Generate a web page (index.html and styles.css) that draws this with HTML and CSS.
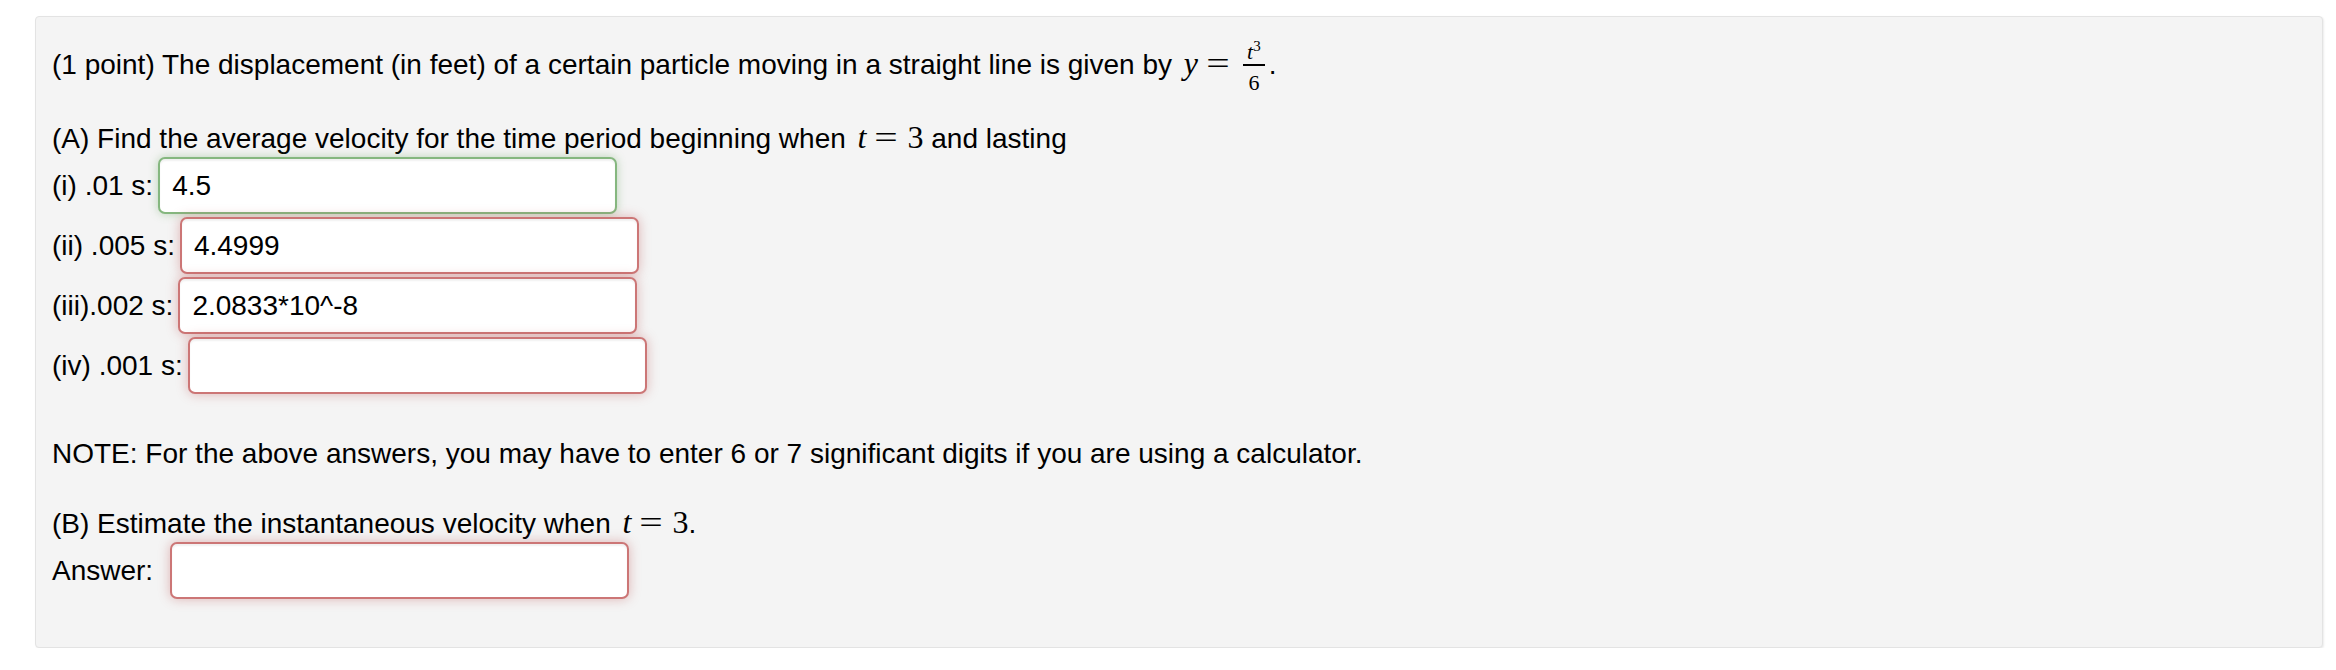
FILE: index.html
```html
<!DOCTYPE html>
<html lang="en">
<head>
    <meta charset="UTF-8">
    <title>Problem 1</title>
    <link rel="stylesheet" href="styles.css">
</head>
<body>
    <div class="problem">
        <div class="line first">(1 point) The displacement (in feet) of a certain particle moving in a straight line is given by <span class="math"><i>y</i><span class="op">=</span><span class="frac"><span class="num"><i>t</i><sup>3</sup></span><span class="den">6</span></span></span>.</div>

        <div class="line">(A) Find the average velocity for the time period beginning when <span class="math"><i>t</i><span class="op">=</span>3</span> and lasting</div>
        <div class="row"><span>(i) .01 s:</span><input class="answer correct" type="text" value="4.5"></div>
        <div class="row"><span>(ii) .005 s:</span><input class="answer incorrect" type="text" value="4.4999"></div>
        <div class="row"><span>(iii).002 s:</span><input class="answer incorrect" type="text" value="2.0833*10^-8"></div>
        <div class="row"><span>(iv) .001 s:</span><input class="answer incorrect" type="text" value=""></div>

        <div class="line note">NOTE: For the above answers, you may have to enter 6 or 7 significant digits if you are using a calculator.</div>

        <div class="line">(B) Estimate the instantaneous velocity when <span class="math"><i>t</i><span class="op">=</span>3</span>.</div>
        <div class="row last"><span>Answer:</span><input class="answer incorrect wide-gap" type="text" value=""></div>
    </div>
</body>
</html>
```

FILE: styles.css
```css
body {
    margin: 0;
    background-color: #fff;
    color: #000;
    font-family: 'Liberation Sans', Helvetica, Arial, sans-serif;
    font-size: 28px;
}

.problem {
    box-sizing: border-box;
    width: 2288px;
    margin: 16px 0 0 35px;
    padding: 26px 16px 48px 16px;
    background-color: #f4f4f4;
    border: 1px solid #e3e3e3;
    border-radius: 4px;
    box-shadow: 1px 1px 2px rgba(0, 0, 0, 0.08);
}

.line {
    height: 40px;
    line-height: 40px;
    white-space: nowrap;
}

.line.first {
    margin-bottom: 34px;
}

.line.note {
    margin-top: 40px;
    margin-bottom: 28px;
}

.math {
    font-family: 'Liberation Serif', 'Times New Roman', serif;
    font-size: 32px;
    margin-left: 4px;
}

.math .op {
    display: inline-block;
    margin: 0 12px 0 11px;
    transform: scaleX(1.3);
}

.frac {
    display: inline-flex;
    flex-direction: column;
    align-items: center;
    vertical-align: 15px;
    font-size: 22px;
    margin: 0 4px 0 4px;
}

.frac .num {
    line-height: 18px;
    padding: 0 4px 3px 4px;
}

.frac .num sup {
    font-size: 15px;
    vertical-align: 8px;
    line-height: 0;
}

.frac .den {
    align-self: stretch;
    text-align: center;
    line-height: 22px;
    padding-top: 6px;
    border-top: 2px solid #000;
}

.row {
    display: flex;
    align-items: center;
    height: 57px;
    margin-bottom: 3px;
}

.row.last {
    margin-bottom: 0;
}

.answer {
    box-sizing: border-box;
    width: 459px;
    height: 57px;
    margin-left: 5px;
    padding: 0 12px;
    font-family: inherit;
    font-size: 28px;
    color: #000;
    background-color: #fff;
    border: 2px solid #ccc;
    border-radius: 7px;
    outline: none;
}

.answer.wide-gap {
    margin-left: 17px;
}

.correct {
    border-color: rgba(81, 153, 72, 0.7);
    box-shadow: inset 0 2px 2px rgba(0, 0, 0, 0.06), 0 0 10px rgba(81, 153, 72, 0.35);
}

.incorrect {
    border-color: rgba(191, 84, 84, 0.8);
    box-shadow: inset 0 2px 2px rgba(0, 0, 0, 0.06), 0 0 12px rgba(191, 84, 84, 0.4);
}
```
